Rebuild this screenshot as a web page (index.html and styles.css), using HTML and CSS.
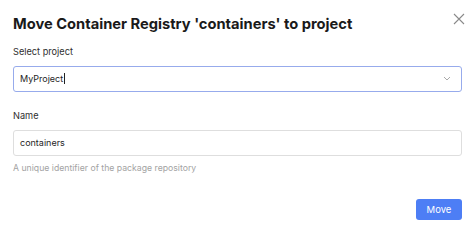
FILE: index.html
```html
<!DOCTYPE html>
<html lang="en">
<head>
<meta charset="utf-8">
<link rel="stylesheet" href="styles.css">
</head>
<body>
<div class="dialog">
  <div class="header">
    <h1 class="title">Move Container Registry 'containers' to project</h1>
    <button class="close" aria-label="Close">
      <svg width="12" height="12" viewBox="0 0 12 12"><path d="M1 1L11 11M11 1L1 11" stroke="#8a8a8a" stroke-width="1.1" fill="none"/></svg>
    </button>
  </div>
  <div class="field">
    <label class="label">Select project</label>
    <div class="select focused">
      <span class="value">MyProject<span class="caret"></span></span>
      <svg class="chev" width="8" height="5" viewBox="0 0 8 5"><path d="M1 1L4 4L7 1" stroke="#aaa" stroke-width="1" fill="none"/></svg>
    </div>
  </div>
  <div class="field">
    <label class="label">Name</label>
    <div class="input"><span class="value">containers</span></div>
    <div class="help">A unique identifier of the package repository</div>
  </div>
  <div class="footer">
    <button class="btn">Move</button>
  </div>
</div>
</body>
</html>
```

FILE: styles.css
```css
* { box-sizing: border-box; }
body {
  margin: 0;
  background: #fff;
  font-family: Inter, "Noto Sans", sans-serif;
  color: #222;
}
.dialog {
  width: 474px;
  height: 228px;
  padding: 15px 12px 0 13px;
  display: flex;
  flex-direction: column;
}
.header {
  display: flex;
  justify-content: space-between;
  align-items: flex-start;
  height: 18px;
}
.title {
  margin: 0;
  font-size: 14.7px;
  line-height: 18px;
  font-weight: 700;
  color: #1a1a1a;
}
.close {
  border: 0;
  background: none;
  padding: 0;
  margin: -3px -4px 0 0;
  width: 14px;
  height: 14px;
  display: flex;
  align-items: center;
  justify-content: center;
}
.field {
  display: flex;
  flex-direction: column;
}
.header + .field { margin-top: 13px; }
.field + .field { margin-top: 18px; }
.label {
  font-size: 9.2px;
  line-height: 12px;
  color: #2e2e2e;
  margin-bottom: 8px;
}
.select, .input {
  height: 26px;
  border: 1px solid #dedede;
  border-radius: 3px;
  display: flex;
  align-items: center;
  justify-content: space-between;
  padding: 0 10px 1px 6px;
  font-size: 9px;
  color: #1e1e1e;
}
.select.focused {
  border: 1.5px solid #97abec;
}
.value { display: flex; align-items: center; }
.caret {
  display: inline-block;
  width: 1px;
  height: 11px;
  background: #222;
  margin-left: 0.5px;
}
.help {
  margin-top: 6px;
  font-size: 8.7px;
  line-height: 12px;
  color: #a3a3a3;
}
.footer {
  display: flex;
  justify-content: flex-end;
  margin-top: 25px;
}
.btn {
  width: 46px;
  height: 21px;
  border: 0;
  border-radius: 3px;
  background: #4d7ef5;
  color: #fff;
  font-family: Inter, "Noto Sans", sans-serif;
  font-size: 9.5px;
  padding: 0;
}
```
